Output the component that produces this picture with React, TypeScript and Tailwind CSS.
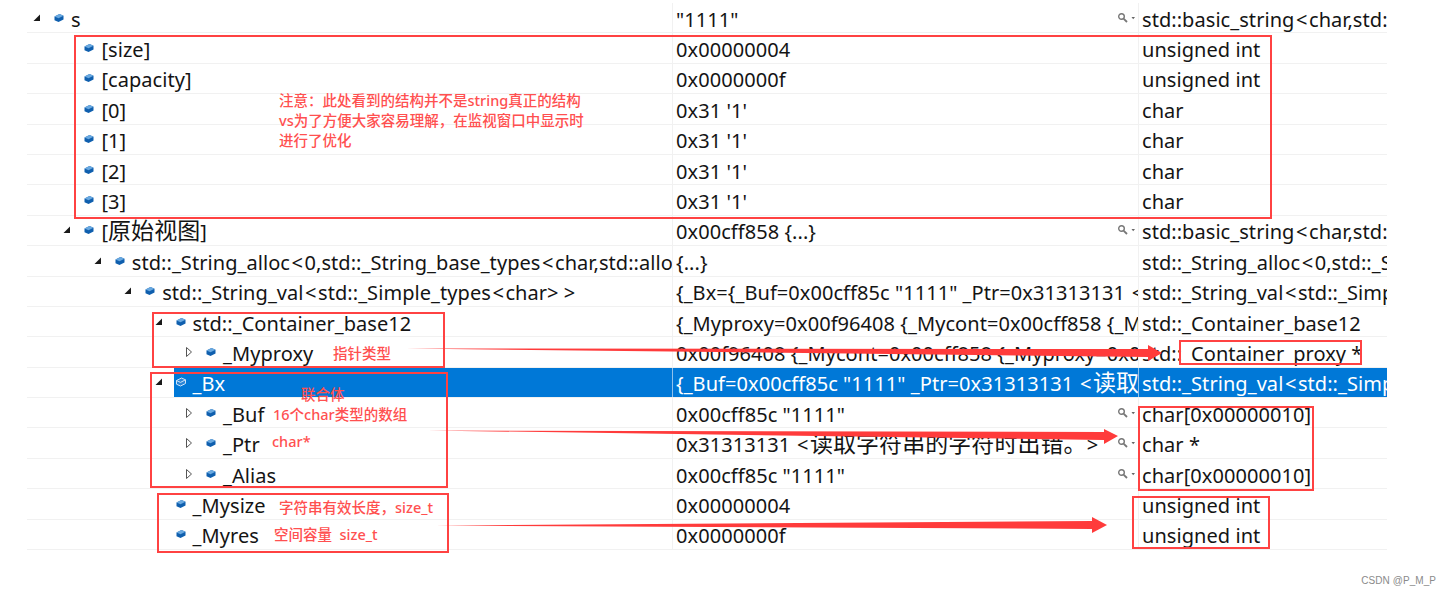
import React from "react";

type Row = {
  level: number;
  tri?: "open" | "closed";
  name: string;
  value: string;
  type: string;
  mag?: boolean;
  sel?: boolean;
};

const rows: Row[] = [
  { level: 0, tri: "open", name: "s", value: '"1111"', type: "std::basic_string<char,std::allocator<char> >", mag: true },
  { level: 1, name: "[size]", value: "0x00000004", type: "unsigned int" },
  { level: 1, name: "[capacity]", value: "0x0000000f", type: "unsigned int" },
  { level: 1, name: "[0]", value: "0x31 '1'", type: "char" },
  { level: 1, name: "[1]", value: "0x31 '1'", type: "char" },
  { level: 1, name: "[2]", value: "0x31 '1'", type: "char" },
  { level: 1, name: "[3]", value: "0x31 '1'", type: "char" },
  { level: 1, tri: "open", name: "[原始视图]", value: "0x00cff858 {...}", type: "std::basic_string<char,std::allocator<char> >", mag: true },
  { level: 2, tri: "open", name: "std::_String_alloc<0,std::_String_base_types<char,std::allocator<char> > >", value: "{...}", type: "std::_String_alloc<0,std::_String_base_types" },
  { level: 3, tri: "open", name: "std::_String_val<std::_Simple_types<char> >", value: '{_Bx={_Buf=0x00cff85c "1111" _Ptr=0x31313131 <读取字符串的字符时出错。>', type: "std::_String_val<std::_Simple_types<char> >" },
  { level: 4, tri: "open", name: "std::_Container_base12", value: "{_Myproxy=0x00f96408 {_Mycont=0x00cff858 {_Myproxy=0x00f96408", type: "std::_Container_base12" },
  { level: 5, tri: "closed", name: "_Myproxy", value: "0x00f96408 {_Mycont=0x00cff858 {_Myproxy=0x00f96408", type: "std::_Container_proxy *" },
  { level: 4, tri: "open", name: "_Bx", value: '{_Buf=0x00cff85c "1111" _Ptr=0x31313131 <读取字符串的字符时出错。>', type: "std::_String_val<std::_Simple_types<char> >", sel: true },
  { level: 5, tri: "closed", name: "_Buf", value: '0x00cff85c "1111"', type: "char[0x00000010]", mag: true },
  { level: 5, tri: "closed", name: "_Ptr", value: "0x31313131 <读取字符串的字符时出错。>", type: "char *", mag: true },
  { level: 5, tri: "closed", name: "_Alias", value: '0x00cff85c "1111"', type: "char[0x00000010]", mag: true },
  { level: 4, name: "_Mysize", value: "0x00000004", type: "unsigned int" },
  { level: 4, name: "_Myres", value: "0x0000000f", type: "unsigned int" },
];

const indent = ["pl-[0px]", "pl-[30.4px]", "pl-[60.8px]", "pl-[91.2px]", "pl-[121.6px]", "pl-[152px]"];

function Txt({ s }: { s: string }) {
  const parts = s.split(/([\u3000-\u9fff]+|<)/);
  return (
    <>
      {parts.map((p, i) =>
        /[\u3000-\u9fff]/.test(p) ? (
          <span key={i} className="text-[23px] leading-none">{p}</span>
        ) : p === "<" ? (
          <span key={i} className="px-[1.5px]">{p}</span>
        ) : (
          <span key={i}>{p}</span>
        )
      )}
    </>
  );
}

function Tri({ kind }: { kind?: "open" | "closed" }) {
  return (
    <span className="w-5 h-5 flex items-center justify-center shrink-0">
      {kind === "open" && (
        <svg width="10" height="10" viewBox="0 0 10 10">
          <path d="M8 1.5V8H1.5Z" fill="#1a1a1a" />
        </svg>
      )}
      {kind === "closed" && (
        <svg width="10" height="12" viewBox="0 0 10 12">
          <path d="M2.5 1.5L7.5 6L2.5 10.5Z" fill="white" stroke="#555" strokeWidth="1" />
        </svg>
      )}
    </span>
  );
}

function Cube({ sel }: { sel?: boolean }) {
  return (
    <svg width="14" height="12" viewBox="0 0 14 12" className="shrink-0">
      {sel ? (
        <>
          <path d="M2.5 4.5L7.5 2L11.5 3.8V7.5L6.5 10L2.5 8.2Z" fill="#2a86d8" stroke="#cfe4f7" strokeWidth="1" />
          <path d="M2.5 4.5L6.5 6.4L11.5 3.8" fill="none" stroke="#cfe4f7" strokeWidth="1" />
        </>
      ) : (
        <>
          <path d="M2.5 4.5L7.5 2L11.5 3.8V7.5L6.5 10L2.5 8.2Z" fill="#0f5fae" />
          <path d="M2.5 4.5L7.5 2L11.5 3.8L6.5 6.3Z" fill="#6aa9e0" />
        </>
      )}
    </svg>
  );
}

function Mag() {
  return (
    <svg width="20" height="12" viewBox="0 0 20 12" className="shrink-0 mr-[1px]">
      <circle cx="4.5" cy="4.5" r="2.8" fill="none" stroke="#777" strokeWidth="1.4" />
      <path d="M6.8 6.8L10 10" stroke="#777" strokeWidth="1.8" />
      <path d="M14.5 5H18L16.2 7.2Z" fill="#666" />
    </svg>
  );
}

function TableRow({ r }: { r: Row }) {
  const sel = r.sel;
  return (
    <div className={`flex h-[30.4px] border-b border-[#f1f1f1] ${sel ? "text-white" : "text-[#141414]"}`}>
      <div className={`w-[645px] shrink-0 flex overflow-hidden ${indent[r.level]}`}>
        <span className="flex items-center shrink-0"><Tri kind={r.tri} /></span>
        <div className={`ml-[5px] flex-1 min-w-0 flex items-center overflow-hidden ${sel ? "bg-[#0078d7]" : ""}`}>
          <Cube sel={sel} />
          <span className="ml-[5px] pt-1 whitespace-nowrap"><Txt s={r.name} /></span>
        </div>
      </div>
      <div className={`w-[466px] shrink-0 flex items-center justify-between overflow-hidden border-l pl-[3px] ${sel ? "bg-[#0078d7] border-[#8fc1ec]" : "border-[#f1f1f1]"}`}>
        <span className="pt-1 whitespace-nowrap flex-1 min-w-0 overflow-hidden"><Txt s={r.value} /></span>
        {r.mag && <Mag />}
      </div>
      <div className={`w-[249px] shrink-0 flex items-center overflow-hidden border-l pl-[3px] ${sel ? "bg-[#0078d7] border-[#8fc1ec]" : "border-[#f1f1f1]"}`}>
        <span className="pt-1 whitespace-nowrap"><Txt s={r.type} /></span>
      </div>
    </div>
  );
}

const note = "absolute whitespace-nowrap text-[14.5px] tracking-normal leading-[20px] font-medium text-[#ff5050]";
const box = "absolute border-2 border-[#ff4242]";

export default function App() {
  return (
    <div className="relative w-[1450px] h-[596px] overflow-hidden bg-white text-[20px] tracking-[0.06px] leading-[30px] font-['Noto_Sans','Noto_Sans_CJK_SC',sans-serif]">
      <div className="ml-[27px] pt-[3px] w-[1360px]">
        {rows.map((r, i) => (
          <TableRow key={i} r={r} />
        ))}
      </div>

      <div className={`${box} left-[74px] top-[35px] w-[1198px] h-[184px]`} />
      <div className={`${box} left-[152px] top-[312px] w-[293px] h-[56px]`} />
      <div className={`${box} left-[150px] top-[372px] w-[298px] h-[116px]`} />
      <div className={`${box} left-[157px] top-[493px] w-[292px] h-[60px]`} />
      <div className={`${box} left-[1179px] top-[340px] w-[183px] h-[25px]`} />
      <div className={`${box} left-[1138px] top-[406px] w-[176px] h-[85px]`} />
      <div className={`${box} left-[1132px] top-[496px] w-[138px] h-[53px]`} />

      <svg className="absolute left-0 top-0 pointer-events-none" width="1450" height="596" viewBox="0 0 1450 596">
        <path d="M406 348.5L1148 349V345L1162 353L1148 361V357Z" fill="#ff3b3b" />
        <path d="M428 430.5L1104 432V429L1118 436L1104 444V440Z" fill="#ff3b3b" />
        <path d="M436 525.5L1092 521V517L1107 525L1092 533V529Z" fill="#ff3b3b" />
      </svg>

      <div className={`${note} left-[279px] top-[90px]`}>注意：此处看到的结构并不是string真正的结构</div>
      <div className={`${note} left-[279px] top-[110px]`}>vs为了方便大家容易理解，在监视窗口中显示时</div>
      <div className={`${note} left-[279px] top-[130px]`}>进行了优化</div>
      <div className={`${note} left-[333px] top-[343px]`}>指针类型</div>
      <div className={`${note} left-[301px] top-[384px]`}>联合体</div>
      <div className={`${note} left-[273px] top-[404px]`}>16个char类型的数组</div>
      <div className={`${note} left-[272px] top-[431px]`}>char*</div>
      <div className={`${note} left-[279px] top-[497px]`}>字符串有效长度，size_t</div>
      <div className={`${note} left-[274px] top-[524px]`}>空间容量&nbsp;&nbsp;size_t</div>

      <div className="absolute right-[14px] top-[574px] text-[10px] leading-[14px] text-[#8a8a8a] font-['Liberation_Sans',sans-serif]">CSDN @P_M_P</div>
    </div>
  );
}
